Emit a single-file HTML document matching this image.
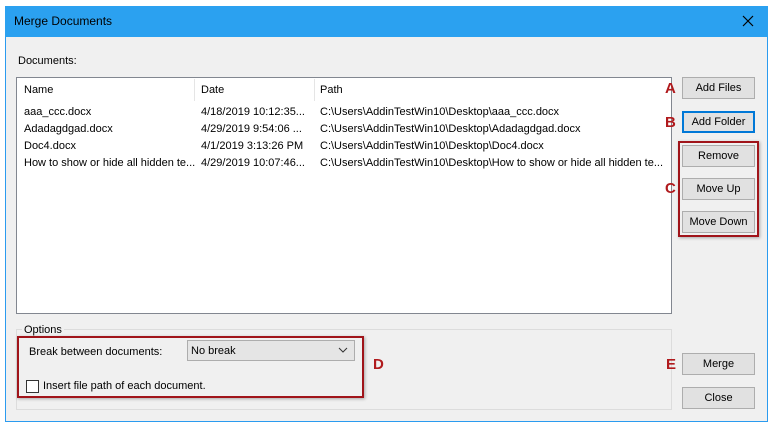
<!DOCTYPE html>
<html><head><style>
*{margin:0;padding:0;box-sizing:border-box}
body{width:772px;height:429px;background:#fff;font-family:"Liberation Sans",sans-serif;font-size:11px;color:#000;position:relative;overflow:hidden}
.a{position:absolute}
.win{left:5px;top:6px;width:763px;height:416px;border:1px solid #2b9bef;background:#f0f0f0}
.title{left:5px;top:6px;width:763px;height:31px;background:#2ba1f0}
.btn{position:absolute;left:682px;width:73px;height:22px;background:#e1e1e1;border:1px solid #adadad;text-align:center;line-height:20px}
.red{position:absolute;border:2px solid #a0141a;box-shadow:1px 1px 3px rgba(0,0,0,.3)}
.L{position:absolute;color:#b01a1d;font-weight:bold;font-size:15px}
.t{position:absolute;white-space:nowrap}
</style></head><body>
<div class="a win"></div>
<div class="a title"></div>
<div class="t" style="left:14px;top:14px;font-size:12px">Merge Documents</div>
<svg class="a" style="left:742px;top:15px" width="12" height="12"><path d="M1 1L11 11M11 1L1 11" stroke="#000" stroke-width="1.2"/></svg>
<div class="t" style="left:18px;top:55px">Documents:</div>
<div class="a" style="left:16px;top:77px;width:656px;height:237px;background:#fff;border:1px solid #828790"></div>
<div class="a" style="left:194px;top:79px;width:1px;height:22px;background:#e5e5e5"></div>
<div class="a" style="left:314px;top:79px;width:1px;height:22px;background:#e5e5e5"></div>
<div class="t" style="left:24px;top:84px">Name</div>
<div class="t" style="left:201px;top:84px">Date</div>
<div class="t" style="left:320px;top:84px">Path</div>
<div class="t" style="left:24px;top:104px;line-height:17px">aaa_ccc.docx<br>Adadagdgad.docx<br>Doc4.docx<br>How to show or hide all hidden te...</div>
<div class="t" style="left:201px;top:104px;line-height:17px">4/18/2019 10:12:35...<br>4/29/2019 9:54:06 ...<br>4/1/2019 3:13:26 PM<br>4/29/2019 10:07:46...</div>
<div class="t" style="left:320px;top:104px;line-height:17px">C:\Users\AddinTestWin10\Desktop\aaa_ccc.docx<br>C:\Users\AddinTestWin10\Desktop\Adadagdgad.docx<br>C:\Users\AddinTestWin10\Desktop\Doc4.docx<br>C:\Users\AddinTestWin10\Desktop\How to show or hide all hidden te...</div>
<div class="btn" style="top:77px">Add Files</div>
<div class="btn" style="top:111px;border:2px solid #0078d7;line-height:18px">Add Folder</div>
<div class="btn" style="top:145px">Remove</div>
<div class="btn" style="top:178px">Move Up</div>
<div class="btn" style="top:211px">Move Down</div>
<div class="red" style="left:678px;top:141px;width:81px;height:96px"></div>
<div class="L" style="left:665px;top:80px">A</div>
<div class="L" style="left:665px;top:114px">B</div>
<div class="L" style="left:665px;top:180px">C</div>
<div class="a" style="left:16px;top:329px;width:656px;height:81px;border:1px solid #dcdcdc"></div>
<div class="t" style="left:22px;top:324px;background:#f0f0f0;padding:0 2px">Options</div>
<div class="red" style="left:17px;top:336px;width:347px;height:62px"></div>
<div class="t" style="left:29px;top:346px">Break between documents:</div>
<div class="a" style="left:187px;top:340px;width:168px;height:21px;background:#e5e5e5;border:1px solid #adadad"></div>
<div class="t" style="left:191px;top:345px">No break</div>
<svg class="a" style="left:338px;top:347px" width="10" height="6"><path d="M1 1L5 5L9 1" stroke="#333" fill="none"/></svg>
<div class="a" style="left:26px;top:380px;width:13px;height:13px;background:#fff;border:1px solid #333"></div>
<div class="t" style="left:43px;top:380px">Insert file path of each document.</div>
<div class="L" style="left:373px;top:356px">D</div>
<div class="L" style="left:666px;top:356px">E</div>
<div class="btn" style="top:353px">Merge</div>
<div class="btn" style="top:387px">Close</div>
</body></html>
